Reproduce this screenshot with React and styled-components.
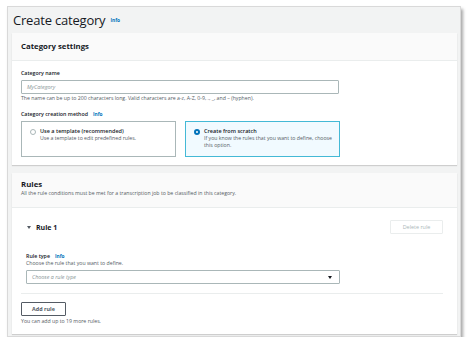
import React from "react";
import styled, { createGlobalStyle } from "styled-components";

const GlobalStyle = createGlobalStyle`
  body {
    margin: 0;
    background: #ffffff;
    font-family: "Open Sans", "Liberation Sans", sans-serif;
    color: #16191f;
  }
`;

const Window = styled.div`
  box-sizing: border-box;
  margin: 6px 0 0 7px;
  width: 454px;
  height: 331px;
  padding: 0 3px 0 4px;
  background: #f2f3f3;
  border: 1px solid #d9d9d9;
  box-shadow: 2px 3px 3px rgba(0, 0, 0, 0.35);
  display: flex;
  flex-direction: column;
`;

const TitleRow = styled.div`
  height: 26px;
  display: flex;
  align-items: center;
  gap: 5px;
  padding-left: 1px;
`;

const Title = styled.h1`
  margin: 0;
  font-size: 13px;
  font-weight: 400;
  letter-spacing: -0.2px;
`;

const Info = styled.span`
  font-size: 4.8px;
  font-weight: 700;
  color: #0073bb;
  margin-left: ${(p) => p.$gap || 0}px;
`;

const Card = styled.section`
  background: #ffffff;
  box-shadow: 0 1px 1px rgba(0, 0, 0, 0.15);
  margin-bottom: ${(p) => p.$mb || 0}px;
  display: flex;
  flex-direction: column;
`;

const CardHeader = styled.div`
  box-sizing: border-box;
  height: ${(p) => p.$h}px;
  background: #fafafa;
  border-bottom: 1px solid #eaeded;
  padding: ${(p) => p.$pt || 0}px 9px 0;
  display: flex;
  flex-direction: column;
  justify-content: ${(p) => (p.$center ? "center" : "flex-start")};
`;

const CardTitle = styled.h2`
  margin: 0;
  font-size: 7.8px;
  font-weight: 700;
  line-height: 11px;
`;

const Desc = styled.p`
  margin: ${(p) => p.$mt || 0}px 0 0;
  font-size: 5.2px;
  line-height: 7px;
  color: #545b64;
  white-space: ${(p) => (p.$nowrap ? "nowrap" : "normal")};
`;

const CardBody = styled.div`
  padding: ${(p) => p.$pad};
  display: flex;
  flex-direction: column;
`;

const Label = styled.div`
  font-size: 5.3px;
  font-weight: 600;
  line-height: 8px;
  margin-top: ${(p) => p.$mt || 0}px;
  display: flex;
  align-items: center;
`;

const Input = styled.div`
  box-sizing: border-box;
  width: ${(p) => p.$w}px;
  height: 14px;
  border: 1px solid #aab7b8;
  border-radius: 1px;
  display: flex;
  align-items: center;
  justify-content: space-between;
  padding: 0 7px 0 5px;
  margin-top: ${(p) => p.$mt || 0}px;
  font-size: 5.4px;
  font-style: italic;
  color: #879596;
`;

const Tiles = styled.div`
  display: flex;
  gap: 9px;
  margin-top: 3px;
`;

const Tile = styled.div`
  box-sizing: border-box;
  width: 155px;
  height: 36px;
  border: 1px solid ${(p) => (p.$on ? "#44b9d6" : "#aab7b8")};
  background: ${(p) => (p.$on ? "#f1faff" : "#ffffff")};
  display: flex;
  gap: 4px;
  padding: 6px 5px 6px 8px;
`;

const Radio = styled.span`
  box-sizing: border-box;
  flex: none;
  width: 6px;
  height: 6px;
  margin-top: 1px;
  border-radius: 50%;
  border: ${(p) => (p.$on ? "2px solid #0073bb" : "1px solid #aab7b8")};
  background: #ffffff;
`;

const TileText = styled.div`
  display: flex;
  flex-direction: column;
`;

const TileTitle = styled.div`
  font-size: 5.5px;
  font-weight: 600;
  line-height: 7px;
`;

const RuleHead = styled.div`
  display: flex;
  align-items: center;
  justify-content: space-between;
  height: 14px;
`;

const RuleName = styled.div`
  display: flex;
  align-items: center;
  gap: 5px;
  padding-left: 6px;
  font-size: 7px;
  font-weight: 700;
`;

const Caret = styled.span`
  width: 0;
  height: 0;
  border-left: 2px solid transparent;
  border-right: 2px solid transparent;
  border-top: 3px solid ${(p) => p.$color || "#545b64"};
`;

const Button = styled.button`
  box-sizing: border-box;
  width: ${(p) => p.$w}px;
  height: 14px;
  padding: 0;
  background: #ffffff;
  border: 1px solid ${(p) => (p.$disabled ? "#eaeded" : "#545b64")};
  border-radius: 1px;
  font-family: inherit;
  font-size: 5.4px;
  font-weight: ${(p) => (p.$disabled ? 400 : 700)};
  color: ${(p) => (p.$disabled ? "#aab7b8" : "#545b64")};
`;

const RuleField = styled.div`
  padding-left: 5px;
  margin-top: 18px;
  display: flex;
  flex-direction: column;
`;

const Divider = styled.hr`
  margin: 9px 0 8px;
  border: 0;
  border-top: 1px solid #eaeded;
`;

export default function App() {
  return (
    <>
      <GlobalStyle />
      <Window>
        <TitleRow>
          <Title>Create category</Title>
          <Info>Info</Info>
        </TitleRow>

        <Card $mb={8}>
          <CardHeader $h={28} $center>
            <CardTitle>Category settings</CardTitle>
          </CardHeader>
          <CardBody $pad="8px 9px 8px">
            <Label>Category name</Label>
            <Input $mt={3} $w={318}>MyCategory</Input>
            <Desc $mt={1} $nowrap>
              The name can be up to 200 characters long. Valid characters are a-z, A-Z, 0-9, ., _, and – (hyphen).
            </Desc>
            <Label $mt={8}>
              Category creation method<Info $gap={5}>Info</Info>
            </Label>
            <Tiles>
              <Tile>
                <Radio />
                <TileText>
                  <TileTitle>Use a template (recommended)</TileTitle>
                  <Desc>Use a template to edit predefined rules.</Desc>
                </TileText>
              </Tile>
              <Tile $on>
                <Radio $on />
                <TileText>
                  <TileTitle>Create from scratch</TileTitle>
                  <Desc>If you know the rules that you want to define, choose this option.</Desc>
                </TileText>
              </Tile>
            </Tiles>
          </CardBody>
        </Card>

        <Card>
          <CardHeader $h={35} $pt={6}>
            <CardTitle>Rules</CardTitle>
            <Desc $nowrap>
              All the rule conditions must be met for a transcription job to be classified in this category.
            </Desc>
          </CardHeader>
          <CardBody $pad="12px 14px 9px 9px">
            <RuleHead>
              <RuleName>
                <Caret $color="#545b64" />
                Rule 1
              </RuleName>
              <Button $w={53} $disabled>Delete rule</Button>
            </RuleHead>
            <RuleField>
              <Label>
                Rule type<Info $gap={5}>Info</Info>
              </Label>
              <Desc>Choose the rule that you want to define.</Desc>
              <Input $mt={3} $w={314}>
                Choose a rule type
                <Caret $color="#16191f" />
              </Input>
            </RuleField>
            <Divider />
            <Button $w={45}>Add rule</Button>
            <Desc $mt={2}>You can add up to 19 more rules.</Desc>
          </CardBody>
        </Card>
      </Window>
    </>
  );
}
